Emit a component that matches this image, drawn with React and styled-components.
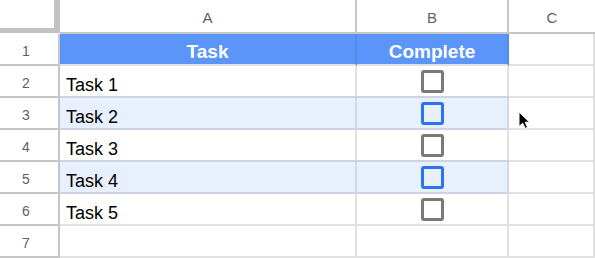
import React from 'react';
import styled, {createGlobalStyle} from 'styled-components';

const GlobalStyle = createGlobalStyle`
  html, body {
    margin: 0;
    padding: 0;
    background: #fff;
    overflow: hidden;
  }
  body {
    font-family: "Liberation Sans", Arial, Helvetica, sans-serif;
  }
`;

const tasks = [
    {name: 'Task 1', focus: false},
    {name: 'Task 2', focus: true},
    {name: 'Task 3', focus: false},
    {name: 'Task 4', focus: true},
    {name: 'Task 5', focus: false},
];

const App = () => {
    return (
        <>
            <GlobalStyle/>
            <Sheet>
                <Corner/>
                <ColHeader>A</ColHeader>
                <ColHeader>B</ColHeader>
                <ColHeader className={'last'}>C</ColHeader>

                <RowHeader>1</RowHeader>
                <TitleCell>Task</TitleCell>
                <TitleCell>Complete</TitleCell>
                <Cell/>

                {
                    tasks.map((task, index) => (
                        <React.Fragment key={task.name}>
                            <RowHeader>{index + 2}</RowHeader>
                            <Cell $focus={task.focus}>{task.name}</Cell>
                            <Cell $focus={task.focus} $center>
                                <Checkbox $focus={task.focus}/>
                            </Cell>
                            <Cell/>
                        </React.Fragment>
                    ))
                }

                <RowHeader>7</RowHeader>
                <Cell/>
                <Cell/>
                <Cell/>

                <Pointer viewBox="0 0 12 18" width="12" height="18">
                    <path d="M1 1 L1 15.5 L4.6 12.2 L7.2 17.4 L9.6 16.3 L7.1 11.2 L11.6 11.2 Z"
                          fill="#000" stroke="#fff" strokeWidth="1" strokeLinejoin="round"/>
                </Pointer>
            </Sheet>
        </>
    )
}

const Sheet = styled.div`
  position: relative;
  display: grid;
  grid-template-columns: 60px 297px 152px 86px;
  grid-template-rows: 34px repeat(7, 32px);
  width: 595px;
  height: 258px;
  overflow: hidden;
`;

const Corner = styled.div`
  box-sizing: border-box;
  border-right: 6px solid #c2c2c2;
  border-bottom: 5px solid #c2c2c2;
  height: 33px;
`;

const ColHeader = styled.div`
  box-sizing: border-box;
  display: flex;
  align-items: center;
  justify-content: center;
  padding-top: 2px;
  font-size: 15px;
  line-height: 17px;
  color: #5f5f5f;
  border-right: 2px solid #c6c6c6;
  border-bottom: 2px solid #c6c6c6;

  &.last {
    border-right: none;
  }
`;

const RowHeader = styled.div`
  box-sizing: border-box;
  display: flex;
  align-items: center;
  justify-content: center;
  padding: 4px 6px 0 0;
  font-size: 14px;
  line-height: 16px;
  color: #5f5f5f;
  border-right: 2px solid #c6c6c6;
  border-bottom: 2px solid #c6c6c6;
`;

const TitleCell = styled.div`
  box-sizing: border-box;
  display: flex;
  align-items: flex-end;
  justify-content: center;
  padding-bottom: 2px;
  background: #5b95f9;
  color: #fff;
  font-weight: bold;
  font-size: 19px;
  line-height: 21px;
  border-right: 2px solid #558ae8;
  border-bottom: 2px solid #e1e1e1;
`;

const Cell = styled.div`
  box-sizing: border-box;
  display: flex;
  align-items: ${p => p.$center ? 'center' : 'flex-end'};
  justify-content: ${p => p.$center ? 'center' : 'flex-start'};
  padding-left: ${p => p.$center ? '0' : '6px'};
  font-size: 18px;
  line-height: 21px;
  color: #000;
  background: ${p => p.$focus ? '#e8effd' : '#fff'};
  border-right: 2px solid ${p => p.$focus ? '#d3d9e4' : '#e1e1e1'};
  border-bottom: 2px solid ${p => p.$focus ? '#ccd4e2' : '#e1e1e1'};
  box-shadow: ${p => p.$focus ? '0 -2px 0 #ccd4e2' : 'none'};
`;

const Checkbox = styled.div`
  box-sizing: border-box;
  width: 23px;
  height: 23px;
  margin-left: 1px;
  border: 3px solid ${p => p.$focus ? '#2a74f2' : '#7a7a7a'};
  border-radius: 3px;
  background: transparent;
`;

const Pointer = styled.svg`
  position: absolute;
  left: 518px;
  top: 111px;
  pointer-events: none;
`;

export default App;
